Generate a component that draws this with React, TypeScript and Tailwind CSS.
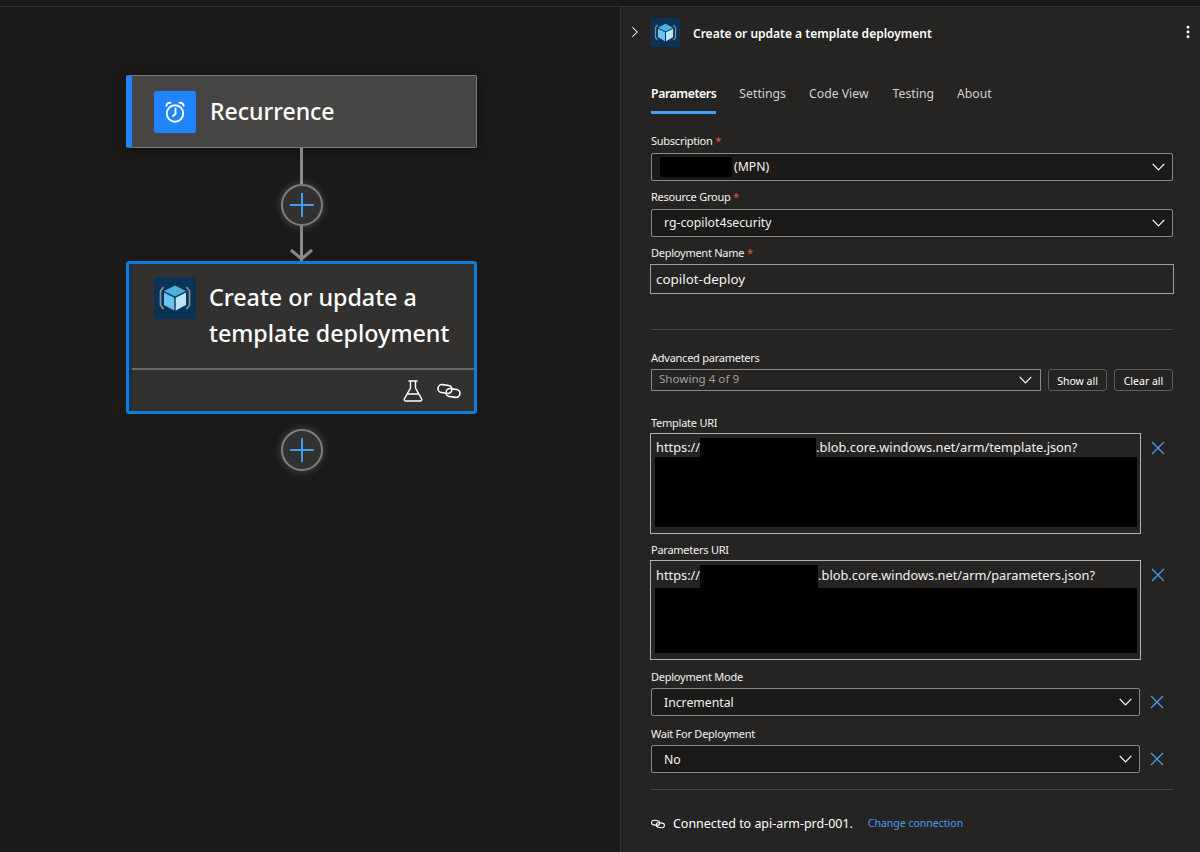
import { ChevronRight, MoreVertical } from 'lucide-react';

const CubeIcon = ({ size }: { size: number }) => (
  <svg width={size} height={size} viewBox="0 0 42 42">
    <rect width="42" height="42" rx="2" fill="#0b3358" />
    <path d="M9.5 10 L6.5 14 V28 L9.5 32" fill="none" stroke="#8a8f94" strokeWidth="1.7" />
    <path d="M32.5 10 L35.5 14 V28 L32.5 32" fill="none" stroke="#8a8f94" strokeWidth="1.7" />
    <path d="M21 8.5 L32 14 L21 19.5 L10 14 Z" fill="#4fb0e0" />
    <path d="M10 15.5 L20.3 20.7 V33.5 L10 28 Z" fill="#6cc3ee" />
    <path d="M32 15.5 L21.7 20.7 V33.5 L32 28 Z" fill="#b8e6f6" />
  </svg>
);

const AlarmIcon = () => (
  <svg width="22" height="24" viewBox="0 0 22 24" fill="none" stroke="#fff" strokeWidth="1.9" strokeLinecap="round">
    <circle cx="11" cy="13.5" r="8.2" />
    <path d="M11.5 8.5 V13.8 L9 16" />
    <path d="M2.3 5.8 C2.8 3.8 4.4 2.6 6.4 2.8" />
    <path d="M19.7 5.8 C19.2 3.8 17.6 2.6 15.6 2.8" />
  </svg>
);

const FlaskIcon = () => (
  <svg width="20" height="22" viewBox="0 0 20 22" fill="none" stroke="#fff" strokeWidth="1.4">
    <path d="M5.5 1 H14.5 M7.5 1 V8 L1.4 18.8 Q0.6 21 3 21 H17 Q19.4 21 18.6 18.8 L12.5 8 V1 M4.5 14 H15.5" />
  </svg>
);

const LinkIcon = ({ width, height, strokeWidth }: { width: number; height: number; strokeWidth: number }) => (
  <svg width={width} height={height} viewBox="0 0 24 16" fill="none" stroke="#fff" strokeWidth={strokeWidth}>
    <rect x="1" y="2" width="14" height="8" rx="4" transform="rotate(8 8 6)" />
    <rect x="9" y="6" width="14" height="8" rx="4" transform="rotate(8 16 10)" />
  </svg>
);

const PlusButton = () => (
  <div className="w-[42px] h-[42px] shrink-0 rounded-full bg-[#323130] border-2 border-[#7f7e7d] shadow-[0_0_8px_rgba(255,255,255,0.22)] flex items-center justify-center">
    <svg width="26" height="26" viewBox="0 0 26 26" stroke="#3aa0f3" strokeWidth="2">
      <path d="M13 1 V25 M1 13 H25" />
    </svg>
  </div>
);

const Chevron = ({ className }: { className: string }) => (
  <svg className={`shrink-0 ${className}`} width="13" height="8" viewBox="0 0 13 8" fill="none" stroke="#fff" strokeWidth="1.2">
    <path d="M0.7 0.8 L6.5 6.8 L12.3 0.8" />
  </svg>
);

const Label = ({ text, required, className }: { text: string; required?: boolean; className: string }) => (
  <div className={`text-[11px] tracking-[-0.25px] leading-[16px] text-[#f3f2f1] ${className}`}>
    {text}
    {required && <span className="text-[#e8533f]"> *</span>}
  </div>
);

const SelectBox = ({ className, children }: { className: string; children: React.ReactNode }) => (
  <div className={`flex items-center justify-between bg-[#1b1a19] border border-[#8a8886] rounded-[2px] text-[12.25px] text-[#f3f2f1] shrink-0 ${className}`}>
    <div className="flex items-center">{children}</div>
    <Chevron className="mr-[7px]" />
  </div>
);

const RemoveIcon = () => (
  <svg className="ml-[10px] shrink-0" width="14" height="14" viewBox="0 0 14 14" stroke="#479ef5" strokeWidth="1.3">
    <path d="M1 1 L13 13 M13 1 L1 13" />
  </svg>
);

const UriBox = ({ suffix, redactWidth, headClass, textClass, className }: { suffix: string; redactWidth: string; headClass: string; textClass: string; className: string }) => (
  <div className={`w-[491px] border border-[#b3b0ad] pt-[4px] pl-[4px] pr-[3px] pb-[4px] flex flex-col shrink-0 ${className}`}>
    <div className={`flex items-stretch text-[12.8px] leading-[19px] text-[#f3f2f1] pl-[1px] shrink-0 ${headClass}`}>
      <span className={textClass}>https://</span>
      <span className={`bg-black ${redactWidth}`} />
      <span className={textClass}>{suffix}</span>
    </div>
    <div className="flex-1 bg-black mb-[2px]" />
  </div>
);

export default function App() {
  return (
    <div className="w-[1200px] h-[852px] overflow-hidden bg-[#1b1a19] flex flex-col font-['Noto_Sans',sans-serif]">
      <div className="h-[7px] shrink-0 bg-[#1b1a19] border-b border-[#323130]" />
      <div className="flex flex-1 min-h-0">
        {/* Canvas */}
        <div className="w-[620px] shrink-0 pl-[126px] pt-[68px]">
          <div className="w-[351px] flex flex-col items-center">
            <div className="w-full h-[73px] flex items-center bg-[#484644] border border-[#7a7977] border-l-[6px] border-l-[#1f85ff] rounded-[2px] pl-[22px] shadow-[0_2px_10px_rgba(0,0,0,0.4)]">
              <div className="w-[42px] h-[42px] rounded-[2px] bg-[#1f85ff] flex items-center justify-center">
                <AlarmIcon />
              </div>
              <span className="ml-[14px] text-[23px] font-medium text-white">Recurrence</span>
            </div>
            <div className="w-[3px] h-[36px] bg-[#8a8886]" />
            <PlusButton />
            <div className="relative w-[3px] h-[35px] bg-[#8a8886]">
              <svg className="absolute left-[-10px] bottom-0" width="23" height="13" viewBox="0 0 23 13" fill="none" stroke="#8a8886" strokeWidth="3">
                <path d="M1 2 L11.5 11 L22 2" />
              </svg>
            </div>
            <div className="w-full h-[153px] flex flex-col bg-[#323130] border-[3px] border-[#0f7bdb] rounded-[3px]">
              <div className="flex-1 flex border-l-[3px] border-l-[#0b3358] pl-[22px] pt-[13px]">
                <div className="shrink-0 h-[42px]"><CubeIcon size={42} /></div>
                <div className="ml-[13px] text-[23.3px] leading-[36px] font-medium text-white mt-[2px]">
                  Create or update a<br />template deployment
                </div>
              </div>
              <div className="h-[2px] ml-[3px] bg-[#6b6a69] shrink-0" />
              <div className="h-[41px] shrink-0 flex items-center justify-end border-l-[3px] border-l-[#0b3358] pr-[13px] gap-[14px]">
                <FlaskIcon />
                <LinkIcon width={24} height={16} strokeWidth={1.6} />
              </div>
            </div>
            <div className="h-[15px]" />
            <PlusButton />
          </div>
        </div>

        {/* Panel */}
        <div className="flex-1 min-w-0 bg-[#252423] border-l border-[#323130] pl-[30px] pr-[26px] flex flex-col text-[#f3f2f1]">
          <div className="h-[40px] mt-[6px] flex items-center relative shrink-0">
            <ChevronRight className="absolute left-[-25px] w-[18px] h-[18px] -mt-[2px] text-white" strokeWidth={1.4} />
            <div className="-mt-[2px]"><CubeIcon size={29} /></div>
            <span className="ml-[13px] mt-[2px] text-[12px] font-semibold text-white">Create or update a template deployment</span>
            <MoreVertical className="absolute right-[-22px] w-[16px] h-[16px] -mt-[2px] text-white" strokeWidth={2.4} />
          </div>

          <div className="mt-[30px] h-[31px] flex text-[12.25px] text-[#d2d0ce] gap-[23px] shrink-0">
            <div className="h-full border-b-[3px] border-[#479ef5] font-semibold tracking-[-0.4px] text-white pt-[2px]">Parameters</div>
            <div className="pt-[2px]">Settings</div>
            <div className="pt-[2px]">Code View</div>
            <div className="pt-[2px] ml-[1px]">Testing</div>
            <div className="pt-[2px]">About</div>
          </div>

          <Label text="Subscription" required className="mt-[19px]" />
          <SelectBox className="h-[28px] mt-[4px] w-[522px]">
            <span className="w-[72px] h-[20px] ml-[8px] bg-black" />
            <span className="ml-[2px]">(MPN)</span>
          </SelectBox>

          <Label text="Resource Group" required className="mt-[8px]" />
          <SelectBox className="h-[28px] mt-[4px] w-[522px]">
            <span className="ml-[12px]">rg-copilot4security</span>
          </SelectBox>

          <Label text="Deployment Name" required className="mt-[8px]" />
          <div className="h-[30px] mt-[3px] -ml-[1px] w-[524px] shrink-0 border border-[#a19f9d] bg-[#252423] flex items-center pl-[5px] text-[13.4px]">copilot-deploy</div>

          <div className="h-px bg-[#484644] mt-[35px] w-[522px] shrink-0" />

          <Label text="Advanced parameters" className="mt-[20px]" />
          <div className="flex mt-[3px] shrink-0 w-[522px]">
            <div className="w-[390px] h-[22px] flex items-center justify-between border border-[#8a8886] text-[11.6px] text-[#a19f9d] pl-[7px] pr-[1px]">
              <span className="-mt-[2px]">Showing 4 of 9</span>
              <Chevron className="mr-[7px]" />
            </div>
            <div className="ml-[7px] w-[59px] h-[22px] pt-[3px] border border-[#605e5c] rounded-[3px] flex items-center justify-center text-[10.5px] text-white">Show all</div>
            <div className="ml-[7px] w-[59px] h-[22px] pt-[3px] border border-[#605e5c] rounded-[3px] flex items-center justify-center text-[10.5px] text-white">Clear all</div>
          </div>

          <Label text="Template URI" className="mt-[24px]" />
          <div className="flex items-start -ml-[1px] mt-[2px] shrink-0">
            <UriBox suffix=".blob.core.windows.net/arm/template.json?" redactWidth="w-[116px]" headClass="h-[19px]" textClass="" className="h-[101px]" />
            <div className="mt-[8px]"><RemoveIcon /></div>
          </div>

          <Label text="Parameters URI" className="mt-[8px]" />
          <div className="flex items-start -ml-[1px] mt-[2px] shrink-0">
            <UriBox suffix=".blob.core.windows.net/arm/parameters.json?" redactWidth="w-[118px]" headClass="h-[23px]" textClass="pt-[1px]" className="h-[100px]" />
            <div className="mt-[8px]"><RemoveIcon /></div>
          </div>

          <Label text="Deployment Mode" className="mt-[9px]" />
          <div className="flex items-center mt-[3px] shrink-0">
            <SelectBox className="h-[28px] w-[489px]"><span className="ml-[12px] mt-[2px]">Incremental</span></SelectBox>
            <RemoveIcon />
          </div>

          <Label text="Wait For Deployment" className="mt-[10px]" />
          <div className="flex items-center mt-[3px] shrink-0">
            <SelectBox className="h-[28px] w-[489px]"><span className="ml-[12px] mt-[2px]">No</span></SelectBox>
            <RemoveIcon />
          </div>

          <div className="h-px bg-[#484644] mt-[16px] w-[522px] shrink-0" />

          <div className="flex items-center mt-[25px] shrink-0 text-[12.45px]">
            <LinkIcon width={14} height={10} strokeWidth={2} />
            <span className="ml-[8px] text-white">Connected to api-arm-prd-001.</span>
            <span className="ml-[15px] text-[10.5px] text-[#479ef5]">Change connection</span>
          </div>
        </div>
      </div>
    </div>
  );
}
